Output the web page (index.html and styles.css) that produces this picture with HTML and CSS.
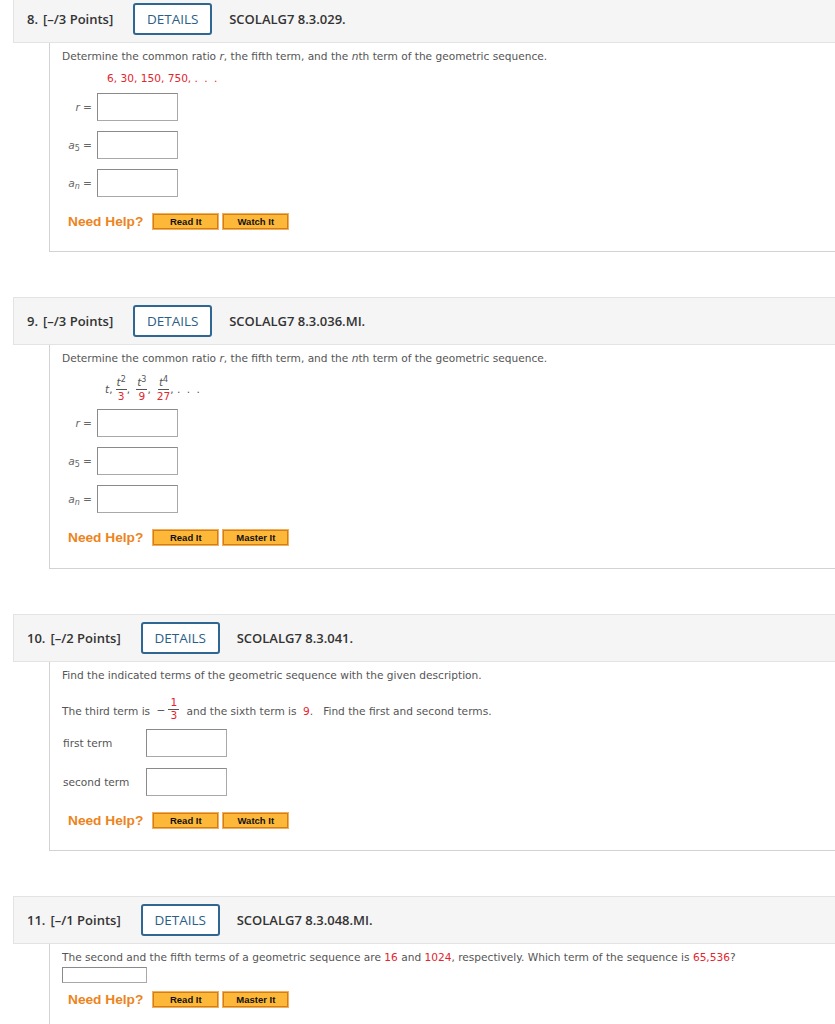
FILE: index.html
```html
<!DOCTYPE html>
<html>
<head>
<meta charset="utf-8">
<link rel="stylesheet" href="styles.css">
</head>
<body>
<div class="page">

  <section class="q">
    <div class="qhead">
      <span class="qnum">8.</span>
      <span class="pts">[–/3 Points]</span>
      <span class="details">DETAILS</span>
      <span class="code">SCOLALG7 8.3.029.</span>
    </div>
    <div class="qbody first">
      <p class="prompt">Determine the common ratio <i>r</i>, the fifth term, and the <i>n</i>th term of the geometric sequence.</p>
      <div class="seq red">6, 30, 150, 750, <span class="dots">. . .</span></div>
      <div class="answers">
        <span class="lbl"><i>r</i> =</span><span class="box"></span>
        <span class="lbl"><i>a</i><sub>5</sub> =</span><span class="box"></span>
        <span class="lbl"><i>a</i><sub><i>n</i></sub> =</span><span class="box"></span>
      </div>
      <div class="help">
        <span class="needhelp">Need Help?</span>
        <span class="hbtn">Read It</span>
        <span class="hbtn">Watch It</span>
      </div>
    </div>
  </section>

  <section class="q">
    <div class="qhead">
      <span class="qnum">9.</span>
      <span class="pts">[–/3 Points]</span>
      <span class="details">DETAILS</span>
      <span class="code">SCOLALG7 8.3.036.MI.</span>
    </div>
    <div class="qbody tall">
      <p class="prompt">Determine the common ratio <i>r</i>, the fifth term, and the <i>n</i>th term of the geometric sequence.</p>
      <div class="seq fseq">
        <span class="term"><i>t</i>,</span>
        <span class="frac"><span class="num"><i>t</i><sup>2</sup></span><span class="den red">3</span></span><span class="comma">,</span>
        <span class="frac"><span class="num"><i>t</i><sup>3</sup></span><span class="den red">9</span></span><span class="comma">,</span>
        <span class="frac"><span class="num"><i>t</i><sup>4</sup></span><span class="den red">27</span></span><span class="comma">, <span class="dots">. . .</span></span>
      </div>
      <div class="answers">
        <span class="lbl"><i>r</i> =</span><span class="box"></span>
        <span class="lbl"><i>a</i><sub>5</sub> =</span><span class="box"></span>
        <span class="lbl"><i>a</i><sub><i>n</i></sub> =</span><span class="box"></span>
      </div>
      <div class="help">
        <span class="needhelp">Need Help?</span>
        <span class="hbtn">Read It</span>
        <span class="hbtn">Master It</span>
      </div>
    </div>
  </section>

  <section class="q">
    <div class="qhead">
      <span class="qnum">10.</span>
      <span class="pts">[–/2 Points]</span>
      <span class="details">DETAILS</span>
      <span class="code">SCOLALG7 8.3.041.</span>
    </div>
    <div class="qbody">
      <p class="prompt">Find the indicated terms of the geometric sequence with the given description.</p>
      <p class="desc"><span class="dtext">The third term is </span><span class="minus">−</span><span class="frac redfrac"><span class="num">1</span><span class="den">3</span></span><span class="dtext"> and the sixth term is </span><span class="red nine dtext">9</span><span class="dtext">.&nbsp;&nbsp; Find the first and second terms.</span></p>
      <div class="answers wide">
        <span class="lbl2">first term</span><span class="box"></span>
        <span class="lbl2">second term</span><span class="box"></span>
      </div>
      <div class="help">
        <span class="needhelp">Need Help?</span>
        <span class="hbtn">Read It</span>
        <span class="hbtn">Watch It</span>
      </div>
    </div>
  </section>

  <section class="q">
    <div class="qhead">
      <span class="qnum">11.</span>
      <span class="pts">[–/1 Points]</span>
      <span class="details">DETAILS</span>
      <span class="code">SCOLALG7 8.3.048.MI.</span>
    </div>
    <div class="qbody">
      <p class="prompt">The second and the fifth terms of a geometric sequence are <span class="red">16</span> and <span class="red">1024</span>, respectively. Which term of the sequence is <span class="red">65,536</span>?</p>
      <span class="box small"></span>
      <div class="help near">
        <span class="needhelp">Need Help?</span>
        <span class="hbtn">Read It</span>
        <span class="hbtn">Master It</span>
      </div>
    </div>
  </section>

</div>
</body>
</html>
```

FILE: styles.css
```css
html, body {
  margin: 0;
  padding: 0;
  background: #ffffff;
}
body {
  overflow: hidden;
}
.page {
  margin-top: -5px;
}
.q {
  margin-left: 13px;
  margin-bottom: 45px;
}
.qhead {
  display: flex;
  align-items: center;
  height: 46px;
  background: #f5f5f5;
  border: 1px solid #e3e3e3;
  border-right: none;
  padding-left: 13px;
  font-family: "Open Sans", sans-serif;
  font-size: 13px;
  font-weight: 600;
  color: #333333;
}
.qnum {
  margin-right: 5px;
}
.pts {
  margin-right: 20px;
}
.details {
  box-sizing: border-box;
  width: 79px;
  height: 32px;
  display: flex;
  align-items: center;
  justify-content: center;
  border: 2px solid #2f6792;
  border-radius: 3px;
  background: #ffffff;
  color: #2b5e88;
  font-size: 13.5px;
  font-weight: 400;
  margin-right: 17px;
}
.qbody {
  margin-left: 36px;
  border-left: 1px solid #d2d2d2;
  border-bottom: 1px solid #d2d2d2;
  padding: 6px 0 21px 12px;
  font-family: "DejaVu Sans", Verdana, sans-serif;
  font-size: 10.6px;
  color: #555555;
}
.qbody.tall {
  padding-bottom: 22px;
}
.prompt {
  margin: 0;
  line-height: 14px;
}
.red {
  color: #e3262e;
}
.dots {
  word-spacing: 3px;
}
.seq {
  margin: 8px 0 0 45px;
  line-height: 14px;
}
.fseq {
  display: flex;
  align-items: center;
  margin: 11px 0 0 43px;
  color: #555555;
}
.term {
  margin-right: 3px;
}
.frac {
  display: inline-flex;
  flex-direction: column;
  align-items: center;
  vertical-align: middle;
  line-height: 12px;
}
.frac .num {
  padding: 0 1px 1px;
  border-bottom: 1px solid #555555;
}
.frac .num sup {
  font-size: 8px;
  line-height: 0;
  vertical-align: 4px;
}
.frac .den {
  padding-top: 0;
}
.comma {
  margin-right: 6px;
}
.answers {
  display: grid;
  grid-template-columns: 30px 81px;
  column-gap: 5px;
  row-gap: 10px;
  align-items: center;
  margin-top: 9px;
}
.qbody.first .answers {
  margin-top: 8px;
}
.qbody.tall .answers {
  margin-top: 7px;
}
.answers.wide {
  grid-template-columns: 84px 81px;
  column-gap: 0;
  row-gap: 11px;
  margin-top: 7px;
}
.lbl {
  text-align: right;
  color: #666666;
  white-space: nowrap;
}
.lbl sub {
  font-size: 8px;
  vertical-align: -2px;
  line-height: 0;
}
.lbl2 {
  color: #555555;
  padding-left: 1px;
}
.box {
  display: block;
  box-sizing: border-box;
  width: 81px;
  height: 28px;
  border: 1px solid #a9a9a9;
  border-top-color: #8a8a8a;
  border-left-color: #8a8a8a;
  background: #ffffff;
}
.box.small {
  width: 85px;
  height: 16px;
  margin-top: 3px;
}
.desc {
  margin: 14px 0 0 0;
  line-height: 26px;
  display: flex;
  align-items: center;
  white-space: pre;
}
.dtext {
  position: relative;
  top: 2px;
}
.minus {
  margin: 0 3px 0 3px;
  position: relative;
  top: 1px;
}
.redfrac {
  color: #e3262e;
  margin-right: 4px;
  line-height: 11px;
}
.redfrac .num {
  border-bottom-color: #555555;
  padding: 0 2px 1px;
}
.nine {
  margin-left: 3px;
}
.help {
  display: flex;
  align-items: center;
  margin-top: 16px;
  margin-left: 6px;
}
.help.near {
  margin-top: 8px;
}
.needhelp {
  font-family: "Liberation Sans", Arial, sans-serif;
  font-weight: bold;
  font-size: 13.7px;
  color: #ec8420;
  margin-right: 9px;
}
.hbtn {
  box-sizing: border-box;
  width: 67px;
  height: 17px;
  display: inline-flex;
  align-items: center;
  justify-content: center;
  background: #fdb83a;
  border: 1px solid #f3ad5c;
  box-shadow: inset 0 0 0 1px #cf7f14;
  font-family: "Liberation Sans", Arial, sans-serif;
  font-weight: bold;
  font-size: 9.5px;
  color: #111111;
  margin-right: 3px;
}
```
